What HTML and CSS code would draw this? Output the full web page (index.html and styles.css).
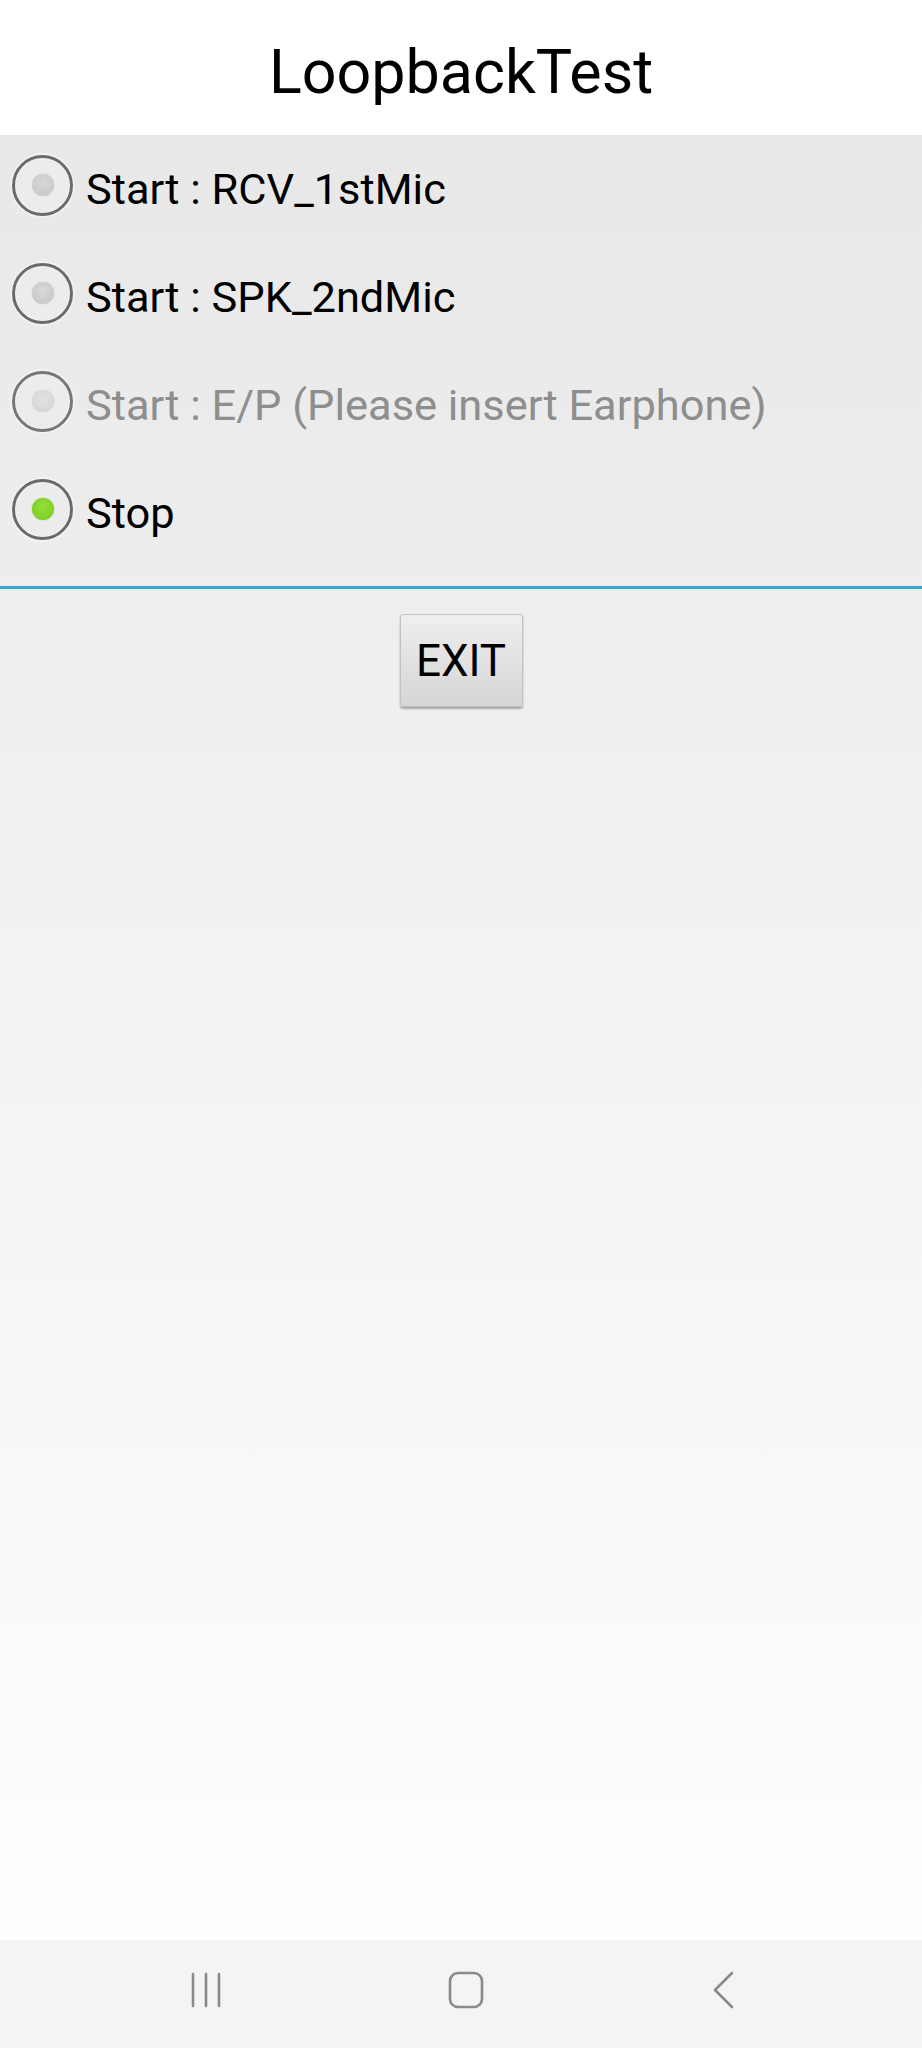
FILE: index.html
```html
<!DOCTYPE html>
<html lang="en">
<head>
    <meta charset="UTF-8">
    <meta name="viewport" content="width=device-width, initial-scale=1.0">
    <title>LoopbackTest</title>
    <link rel="stylesheet" href="styles.css">
</head>
<body>
    <div id="screen">
        <header class="title_bar">
            <h1>LoopbackTest</h1>
        </header>

        <main class="content">
            <ul class="radio_group">
                <li class="radio_row">
                    <span class="radio"><span class="dot"></span></span>
                    <span class="label">Start : RCV_1stMic</span>
                </li>
                <li class="radio_row">
                    <span class="radio"><span class="dot"></span></span>
                    <span class="label">Start : SPK_2ndMic</span>
                </li>
                <li class="radio_row disabled">
                    <span class="radio"><span class="dot"></span></span>
                    <span class="label">Start : E/P (Please insert Earphone)</span>
                </li>
                <li class="radio_row checked">
                    <span class="radio"><span class="dot"></span></span>
                    <span class="label">Stop</span>
                </li>
            </ul>
            <div class="divider"></div>
            <p class="btn_wrap">
                <button class="exit_btn" type="button">EXIT</button>
            </p>
        </main>

        <nav class="nav_bar">
            <!-- 최근 앱 -->
            <svg class="nav_icon" width="34" height="36" viewBox="0 0 34 36">
                <path d="M3 2 V34 M16 2 V34 M29 2 V34" stroke="#8a8a8a" stroke-width="2.6" stroke-linecap="round" fill="none"/>
            </svg>
            <!-- 홈 -->
            <svg class="nav_icon" width="38" height="38" viewBox="0 0 38 38">
                <rect x="3" y="2" width="32" height="34" rx="8" ry="8" stroke="#8a8a8a" stroke-width="2.6" fill="none"/>
            </svg>
            <!-- 뒤로 -->
            <svg class="nav_icon" width="24" height="38" viewBox="0 0 24 38">
                <path d="M20 2 L3 19 L20 36" stroke="#8a8a8a" stroke-width="2.6" stroke-linecap="round" stroke-linejoin="round" fill="none"/>
            </svg>
        </nav>
    </div>
</body>
</html>
```

FILE: styles.css
```css
* {
    margin: 0;
    padding: 0;
    box-sizing: border-box;
}
body {
    font-family: Roboto, "Noto Sans", "Liberation Sans", sans-serif;
    background: #fff;
}
#screen {
    width: 922px;
    height: 2048px;
    display: flex;
    flex-direction: column;
}
.title_bar {
    height: 135px;
    padding-top: 8px;
    background: #fff;
    display: flex;
    align-items: center;
    justify-content: center;
}
.title_bar h1 {
    font-size: 61px;
    font-weight: 400;
    color: #000;
}
.content {
    flex: 1;
    background: linear-gradient(#e8e8e8, #fefefe);
}
.radio_group {
    list-style: none;
    display: flex;
    flex-direction: column;
    gap: 8px;
    padding-bottom: 27px;
}
.radio_row {
    height: 100px;
    display: flex;
    align-items: center;
    padding-left: 12px;
    gap: 13px;
    font-size: 43.4px;
    color: #000;
}
.label {
    padding-top: 9px;
}
.radio_row.disabled {
    color: #8e8e8e;
}
.radio {
    width: 61px;
    height: 61px;
    border-radius: 50%;
    border: 3px solid #6b6b6b;
    background: #ececec;
    box-shadow: 0 0 2px 1px #fafafa, inset 0 0 2px #fff;
    display: flex;
    align-items: center;
    justify-content: center;
    flex-shrink: 0;
}
.disabled .radio {
    border-color: #777;
}
.dot {
    width: 22px;
    height: 22px;
    border-radius: 50%;
    background: radial-gradient(circle at 50% 40%, #d8d8d8, #c4c4c4);
    box-shadow: 0 0 1px #aaa;
}
.disabled .dot {
    background: radial-gradient(circle at 50% 40%, #e2e2e2, #d2d2d2);
}
.checked .dot {
    background: radial-gradient(circle at 50% 40%, #94e03a, #74c81c);
    box-shadow: 0 0 1px #6aa820;
}
.divider {
    height: 3px;
    background: #33a6c9;
}
.btn_wrap {
    text-align: center;
    padding-top: 25px;
}
.exit_btn {
    width: 123px;
    height: 93px;
    font-family: Roboto, "Noto Sans", sans-serif;
    font-size: 44px;
    color: #000;
    border: 1px solid #c2c2c2;
    border-radius: 3px;
    background: linear-gradient(#efefef, #d5d5d5);
    box-shadow: 0 2px 2px rgba(0, 0, 0, 0.3);
}
.nav_bar {
    height: 108px;
    background: #f4f4f6;
    display: flex;
    align-items: center;
    padding-bottom: 8px;
}
.nav_icon:nth-child(1) {
    margin-left: 190px;
}
.nav_icon:nth-child(2) {
    margin-left: 223px;
}
.nav_icon:nth-child(3) {
    margin-left: 227px;
}
```
